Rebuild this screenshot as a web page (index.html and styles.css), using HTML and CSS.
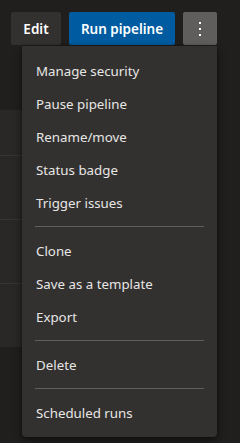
FILE: index.html
```html
<!DOCTYPE html>
<html>
<head>
<meta charset="utf-8">
<link rel="stylesheet" href="styles.css">
</head>
<body>
<div class="page">
  <div class="toolbar">
    <button class="btn btn-edit">Edit</button>
    <button class="btn btn-primary">Run pipeline</button>
    <button class="btn btn-more" aria-label="More actions">
      <svg width="4" height="16" viewBox="0 0 4 16"><rect x="1" y="1" width="2" height="2" fill="#fff"/><rect x="1" y="7" width="2" height="2" fill="#fff"/><rect x="1" y="13" width="2" height="2" fill="#fff"/></svg>
    </button>
  </div>
  <div class="panel">
    <div class="panel-row first"></div>
    <div class="panel-row"></div>
    <div class="panel-row"></div>
    <div class="panel-row"></div>
  </div>
  <div class="menu">
    <div class="item">Manage security</div>
    <div class="item">Pause pipeline</div>
    <div class="item">Rename/move</div>
    <div class="item">Status badge</div>
    <div class="item">Trigger issues</div>
    <div class="sep"></div>
    <div class="item">Clone</div>
    <div class="item">Save as a template</div>
    <div class="item">Export</div>
    <div class="sep"></div>
    <div class="item">Delete</div>
    <div class="sep"></div>
    <div class="item">Scheduled runs</div>
  </div>
</div>
</body>
</html>
```
FILE: styles.css
```css
html, body {
  margin: 0;
  padding: 0;
  background: #201f1e;
  font-family: "Segoe UI", "Noto Sans", "Open Sans", sans-serif;
}
.page {
  position: relative;
  width: 240px;
  height: 443px;
  overflow: hidden;
}
.toolbar {
  display: flex;
  gap: 8px;
  padding: 12px 0 0 11px;
}
.btn {
  height: 33px;
  border: none;
  border-radius: 2px;
  font-family: inherit;
  font-size: 13.5px;
  font-weight: 600;
  color: #fff;
  display: flex;
  align-items: center;
  justify-content: center;
  padding: 0;
}
.btn-edit {
  width: 50px;
  background: #323130;
}
.btn-primary {
  width: 106px;
  background: #005ba1;
}
.btn-more {
  width: 34px;
  background: #605e5c;
}
.panel {
  margin-top: 65px;
  width: 215px;
  background: #292827;
}
.panel-row {
  height: 63px;
  border-top: 1px solid #353432;
}
.panel-row.first {
  height: 45px;
  border-top: none;
}
.menu {
  position: absolute;
  left: 22px;
  top: 46px;
  width: 195px;
  padding: 8px 0;
  background: #323130;
  border-radius: 0 0 4px 4px;
  box-shadow: 0 4px 10px rgba(0, 0, 0, 0.45), 0 0 3px rgba(0, 0, 0, 0.3);
  box-sizing: border-box;
}
.item {
  height: 33px;
  display: flex;
  align-items: center;
  padding-left: 14px;
  font-size: 13.3px;
  color: #e8e6e4;
  white-space: nowrap;
}
.sep {
  height: 1px;
  margin: 7px 13px;
  background: #605e5c;
}
```
